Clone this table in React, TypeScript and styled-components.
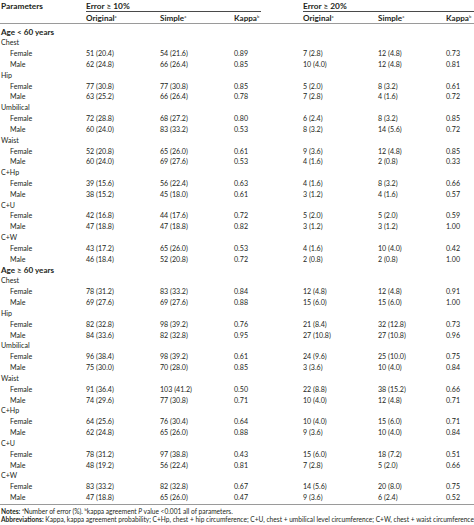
import React from "react";
import styled, { createGlobalStyle } from "styled-components";

const Global = createGlobalStyle`
  html, body { margin: 0; padding: 0; background: #fff; }
  body { font-family: Lato, "Open Sans", sans-serif; color: #231f20; }
`;

const COLS = "86px 74px 74px 69px 75px 68px 1fr";

const Table = styled.div`
  width: 474px;
  display: flex;
  flex-direction: column;
  font-size: 7.1px;
`;

const HeadTop = styled.div`
  display: grid;
  grid-template-columns: ${COLS};
  height: 12px;
  align-items: center;
`;

const HeadLabel = styled.div`
  font-weight: 700;
  font-size: 8.3px;
  padding-left: 1px;
  grid-column: 1;
`;

const GroupHead = styled.div<{ $start: number; $trim: number }>`
  grid-column: ${(p) => p.$start} / span 3;
  align-self: stretch;
  display: flex;
  align-items: center;
  font-weight: 700;
  font-size: 8.3px;
  margin-right: ${(p) => p.$trim}px;
  border-bottom: 1.5px solid #4a4a4a;
`;

const HeadSub = styled.div`
  display: grid;
  grid-template-columns: ${COLS};
  height: 11px;
  align-items: center;
  border-bottom: 1px solid #9a9a9a;
`;

const ColHead = styled.div<{ $col: number }>`
  grid-column: ${(p) => p.$col};
  font-weight: 700;
  font-size: 8.1px;
`;

const Sup = styled.sup`
  font-size: 4px;
  vertical-align: 3px;
  font-weight: 400;
`;

const Body = styled.div`
  display: flex;
  flex-direction: column;
  padding-top: 2.5px;
  border-bottom: 1px solid #9a9a9a;
  padding-bottom: 1px;
`;

const Row = styled.div`
  display: grid;
  grid-template-columns: ${COLS};
  height: 10.84px;
  align-items: center;
  white-space: nowrap;
`;

const Section = styled.div`
  font-weight: 700;
  font-size: 8.1px;
  padding-left: 1px;
`;

const Category = styled.div`
  padding-left: 1px;
`;

const Label = styled.div`
  padding-left: 10px;
`;

const Cell = styled.div``;

const Notes = styled.div`
  font-size: 6.6px;
  line-height: 7.8px;
  padding-top: 1.5px;
  padding-left: 1px;
  white-space: nowrap;
`;

const B = styled.b`
  font-weight: 700;
`;

type Data = [string, string, string, string, string, string];
type Cat = { name: string; f: Data; m: Data };

const young: Cat[] = [
  { name: "Chest", f: ["51 (20.4)", "54 (21.6)", "0.89", "7 (2.8)", "12 (4.8)", "0.73"], m: ["62 (24.8)", "66 (26.4)", "0.85", "10 (4.0)", "12 (4.8)", "0.81"] },
  { name: "Hip", f: ["77 (30.8)", "77 (30.8)", "0.85", "5 (2.0)", "8 (3.2)", "0.61"], m: ["63 (25.2)", "66 (26.4)", "0.78", "7 (2.8)", "4 (1.6)", "0.72"] },
  { name: "Umbilical", f: ["72 (28.8)", "68 (27.2)", "0.80", "6 (2.4)", "8 (3.2)", "0.85"], m: ["60 (24.0)", "83 (33.2)", "0.53", "8 (3.2)", "14 (5.6)", "0.72"] },
  { name: "Waist", f: ["52 (20.8)", "65 (26.0)", "0.61", "9 (3.6)", "12 (4.8)", "0.85"], m: ["60 (24.0)", "69 (27.6)", "0.53", "4 (1.6)", "2 (0.8)", "0.33"] },
  { name: "C+Hp", f: ["39 (15.6)", "56 (22.4)", "0.63", "4 (1.6)", "8 (3.2)", "0.66"], m: ["38 (15.2)", "45 (18.0)", "0.61", "3 (1.2)", "4 (1.6)", "0.57"] },
  { name: "C+U", f: ["42 (16.8)", "44 (17.6)", "0.72", "5 (2.0)", "5 (2.0)", "0.59"], m: ["47 (18.8)", "47 (18.8)", "0.82", "3 (1.2)", "3 (1.2)", "1.00"] },
  { name: "C+W", f: ["43 (17.2)", "65 (26.0)", "0.53", "4 (1.6)", "10 (4.0)", "0.42"], m: ["46 (18.4)", "52 (20.8)", "0.72", "2 (0.8)", "2 (0.8)", "1.00"] },
];

const old: Cat[] = [
  { name: "Chest", f: ["78 (31.2)", "83 (33.2)", "0.84", "12 (4.8)", "12 (4.8)", "0.91"], m: ["69 (27.6)", "69 (27.6)", "0.88", "15 (6.0)", "15 (6.0)", "1.00"] },
  { name: "Hip", f: ["82 (32.8)", "98 (39.2)", "0.76", "21 (8.4)", "32 (12.8)", "0.73"], m: ["84 (33.6)", "82 (32.8)", "0.95", "27 (10.8)", "27 (10.8)", "0.96"] },
  { name: "Umbilical", f: ["96 (38.4)", "98 (39.2)", "0.61", "24 (9.6)", "25 (10.0)", "0.75"], m: ["75 (30.0)", "70 (28.0)", "0.85", "3 (3.6)", "10 (4.0)", "0.84"] },
  { name: "Waist", f: ["91 (36.4)", "103 (41.2)", "0.50", "22 (8.8)", "38 (15.2)", "0.66"], m: ["74 (29.6)", "77 (30.8)", "0.71", "10 (4.0)", "12 (4.8)", "0.71"] },
  { name: "C+Hp", f: ["64 (25.6)", "76 (30.4)", "0.64", "10 (4.0)", "15 (6.0)", "0.71"], m: ["62 (24.8)", "65 (26.0)", "0.88", "9 (3.6)", "10 (4.0)", "0.84"] },
  { name: "C+U", f: ["78 (31.2)", "97 (38.8)", "0.43", "15 (6.0)", "18 (7.2)", "0.51"], m: ["48 (19.2)", "56 (22.4)", "0.81", "7 (2.8)", "5 (2.0)", "0.66"] },
  { name: "C+W", f: ["83 (33.2)", "82 (32.8)", "0.67", "14 (5.6)", "20 (8.0)", "0.75"], m: ["47 (18.8)", "65 (26.0)", "0.47", "9 (3.6)", "6 (2.4)", "0.52"] },
];

const DataRow = ({ label, d }: { label: string; d: Data }) => (
  <Row>
    <Label>{label}</Label>
    {d.map((v, i) => (
      <Cell key={i}>{v}</Cell>
    ))}
  </Row>
);

const Group = ({ title, cats }: { title: React.ReactNode; cats: Cat[] }) => (
  <>
    <Row>
      <Section>{title}</Section>
    </Row>
    {cats.map((c) => (
      <React.Fragment key={c.name}>
        <Row>
          <Category>{c.name}</Category>
        </Row>
        <DataRow label="Female" d={c.f} />
        <DataRow label="Male" d={c.m} />
      </React.Fragment>
    ))}
  </>
);

export default function App() {
  return (
    <>
      <Global />
      <Table>
        <HeadTop>
          <HeadLabel>Parameters</HeadLabel>
          <GroupHead $start={2} $trim={42}>Error ≥ 10%</GroupHead>
          <GroupHead $start={5} $trim={0}>Error ≥ 20%</GroupHead>
        </HeadTop>
        <HeadSub>
          <ColHead $col={2}>Original<Sup>a</Sup></ColHead>
          <ColHead $col={3}>Simple<Sup>a</Sup></ColHead>
          <ColHead $col={4}>Kappa<Sup>b</Sup></ColHead>
          <ColHead $col={5}>Original<Sup>a</Sup></ColHead>
          <ColHead $col={6}>Simple<Sup>a</Sup></ColHead>
          <ColHead $col={7}>Kappa<Sup>b</Sup></ColHead>
        </HeadSub>
        <Body>
          <Group title="Age < 60 years" cats={young} />
          <Group title="Age ≥ 60 years" cats={old} />
        </Body>
        <Notes>
          <B>Notes:</B> <Sup>a</Sup>Number of error (%). <Sup>b</Sup>kappa agreement <i>P</i> value &lt;0.001 all of parameters.
          <br />
          <B>Abbreviations:</B> Kappa, kappa agreement probability; C+Hp, chest + hip circumference; C+U, chest + umbilical level circumference; C+W, chest + waist circumference.
        </Notes>
      </Table>
    </>
  );
}
